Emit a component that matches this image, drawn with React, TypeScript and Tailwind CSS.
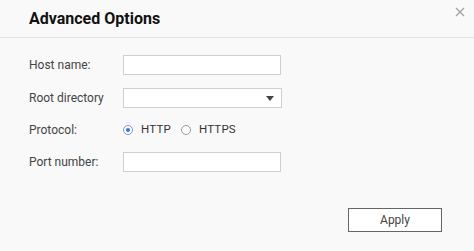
import { useState } from 'react';

function Field({ label, children }: { label: string; children: React.ReactNode }) {
  return (
    <div className="flex h-[20px] items-center">
      <span className="w-[94px] shrink-0 text-[12px] text-[#444]">{label}</span>
      {children}
    </div>
  );
}

function Radio({ checked, label, onClick }: { checked: boolean; label: string; onClick: () => void }) {
  return (
    <button type="button" onClick={onClick} className="flex items-center gap-[8px]">
      <span
        className={`flex h-[10px] w-[10px] items-center justify-center rounded-full border ${
          checked ? 'border-[#7d9ad8]' : 'border-[#999]'
        } bg-white`}
      >
        {checked ? <span className="h-[4px] w-[4px] rounded-full bg-[#3b6fd1]" /> : null}
      </span>
      <span className="text-[11.5px] tracking-[0.2px] text-[#333]">{label}</span>
    </button>
  );
}

export default function App() {
  const [protocol, setProtocol] = useState<'HTTP' | 'HTTPS'>('HTTP');

  return (
    <div className="flex h-[251px] w-[474px] flex-col bg-[#f9f9f9] font-['Roboto',sans-serif]">
      <div className="relative flex h-[38px] shrink-0 items-center border-b border-[#e3e3e3] pl-[29px]">
        <h1 className="text-[16px] font-bold text-[#111]">Advanced Options</h1>
        <button type="button" className="absolute right-[8px] top-[6px] text-[#a0a0a0]">
          <svg width="12" height="12" viewBox="0 0 12 12" stroke="currentColor" strokeWidth="1.2">
            <path d="M2 2 L10 10 M10 2 L2 10" />
          </svg>
        </button>
      </div>

      <div className="flex flex-col pl-[29px] pt-[17px]">
        <Field label="Host name:">
          <input className="h-[20px] w-[158px] border border-[#cfcfcf] bg-white px-1 text-[12px] outline-none" />
        </Field>
        <div className="mt-[13px]">
          <Field label="Root directory">
            <div className="flex h-[20px] w-[159px] items-center justify-end border border-[#cfcfcf] bg-white pr-[7px]">
              <svg width="8" height="5" viewBox="0 0 8 5">
                <path d="M0 0 H8 L4 5 Z" fill="#444" />
              </svg>
            </div>
          </Field>
        </div>
        <div className="mt-[12px]">
          <Field label="Protocol:">
            <div className="flex items-center gap-[10px]">
              <Radio checked={protocol === 'HTTP'} label="HTTP" onClick={() => setProtocol('HTTP')} />
              <Radio checked={protocol === 'HTTPS'} label="HTTPS" onClick={() => setProtocol('HTTPS')} />
            </div>
          </Field>
        </div>
        <div className="mt-[12px]">
          <Field label="Port number:">
            <input className="h-[20px] w-[158px] border border-[#cfcfcf] bg-white px-1 text-[12px] outline-none" />
          </Field>
        </div>
      </div>

      <div className="mt-auto flex justify-end pb-[19px] pr-[32px]">
        <button
          type="button"
          className="h-[24px] w-[94px] border border-[#666] bg-white text-[12px] text-[#444]"
        >
          Apply
        </button>
      </div>
    </div>
  );
}
